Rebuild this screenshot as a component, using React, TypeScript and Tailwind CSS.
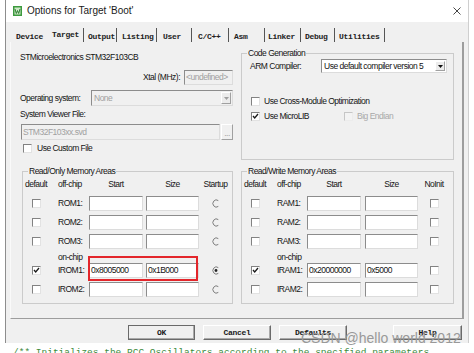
import React from 'react'

const UI = "font-['Liberation_Sans',Arial,sans-serif] text-[8.5px] leading-[11px] tracking-[-0.5px]"
const MONO = "font-['Liberation_Mono','Courier_New',monospace]"

function Check({ checked = false, disabled = false }: { checked?: boolean; disabled?: boolean }) {
  return (
    <span
      className={`relative block w-[9px] h-[9px] shrink-0 border ${
        disabled
          ? 'border-t-[#c6c6c6] border-l-[#c6c6c6] border-r-[#ececec] border-b-[#ececec] bg-[#f3f3f3]'
          : 'border-t-[#828282] border-l-[#828282] border-r-[#e2e2e2] border-b-[#e2e2e2] bg-white'
      }`}
    >
      {checked && (
        <svg viewBox="0 0 7 7" className="absolute left-0 top-0 w-[7px] h-[7px]">
          <path d="M1 3 L2.7 5 L6 1" fill="none" stroke="#1a1a1a" strokeWidth="1.3" />
        </svg>
      )}
    </span>
  )
}

function Radio({ on = false }: { on?: boolean }) {
  return (
    <svg width="8" height="9" viewBox="0 0 8 9" className="block">
      <path d="M6.3 1.6 A3.4 3.6 0 1 0 6.3 7.4" fill="none" stroke="#7c7c7c" strokeWidth="1" />
      {on && <circle cx="4" cy="4.5" r="1.4" fill="#222" />}
    </svg>
  )
}

function Box({ w, h = 'h-[15px]', dim = false, children }: { w: string; h?: string; dim?: boolean; children?: React.ReactNode }) {
  return (
    <div
      className={`${w} ${h} shrink-0 border border-t-[#8c8c8c] border-l-[#8c8c8c] border-r-[#dcdcdc] border-b-[#dcdcdc] pl-[1px] leading-[12px] whitespace-nowrap overflow-hidden ${
        dim ? 'bg-[#f0f0f0] text-[#a0a0a0]' : 'bg-white text-[#141414]'
      }`}
    >
      {children}
    </div>
  )
}

function Select({ w, h, value, dim = false }: { w: string; h: string; value: string; dim?: boolean }) {
  return (
    <div
      className={`${w} ${h} shrink-0 flex border border-t-[#8c8c8c] border-l-[#8c8c8c] border-r-[#dcdcdc] border-b-[#dcdcdc] ${
        dim ? 'bg-[#f0f0f0] text-[#a0a0a0]' : 'bg-white text-[#141414]'
      }`}
    >
      <span className="flex-1 pl-[2px] flex items-center whitespace-nowrap overflow-hidden">{value}</span>
      <span className="w-[10px] m-[1px] flex items-center justify-center bg-[#ececec] border border-t-white border-l-white border-r-[#a0a0a0] border-b-[#a0a0a0]">
        <svg width="5" height="3" viewBox="0 0 5 3">
          <path d="M0 0 H5 L2.5 3 Z" fill={dim ? '#a0a0a0' : '#111'} />
        </svg>
      </span>
    </div>
  )
}

function Group({ title, className, children }: { title: string; className: string; children?: React.ReactNode }) {
  return (
    <fieldset className={`${className} border border-[#cbcbcb] p-0 m-0 min-w-0`}>
      <legend className="ml-[5px] px-[1px] h-[11px] leading-[11px]">{title}</legend>
      {children}
    </fieldset>
  )
}

function MemTable({ ram = false }: { ram?: boolean }) {
  const c2 = ram ? 'w-[39px]' : 'w-[40px]'
  const gap = ram ? 'ml-[4px]' : 'ml-[3px]'
  const c5 = ram ? 'w-[32px]' : 'w-[33px]'
  const p = ram ? 'RAM' : 'ROM'
  const off = [1, 2, 3]
  const on = ram
    ? [
        { n: 'IRAM1:', s: '0x20000000', z: '0x5000', c: true },
        { n: 'IRAM2:', s: '', z: '', c: false },
      ]
    : [
        { n: 'IROM1:', s: '0x8005000', z: '0x1B000', c: true },
        { n: 'IROM2:', s: '', z: '', c: false },
      ]

  const row = (key: string, label: string, s: string, z: string, checked: boolean, mark: boolean, first: boolean) => (
    <div key={key} className={`relative flex items-center h-[15px] ${first ? '' : 'mt-[4px]'}`}>
      <div className="w-[26px] flex justify-center">
        <Check checked={checked} />
      </div>
      <div className={`${c2} pl-[9px] whitespace-nowrap`}>{label}</div>
      <Box w="w-[54px]">{s}</Box>
      <div className={gap}>
        <Box w="w-[53px]">{z}</Box>
      </div>
      <div className={`${c5} flex justify-center`}>{ram ? <Check /> : <Radio on={mark} />}</div>
      {!ram && mark && (
        <div className="absolute left-[65px] top-[-7px] w-[110px] h-[25px] border-2 border-[#e3262b]" />
      )}
    </div>
  )

  return (
    <div>
      <div className="mt-[2px] h-[11px] flex whitespace-nowrap">
        <div className="w-[26px] text-center">default</div>
        <div className={`${c2} pl-[9px]`}>off-chip</div>
        <div className="w-[54px] text-center">Start</div>
        <div className={gap}>
          <div className="w-[53px] text-center">Size</div>
        </div>
        <div className={`${c5} text-center`}>{ram ? 'NoInit' : 'Startup'}</div>
      </div>
      <div className="mt-[6px]">
        {off.map((i) => row(`o${i}`, `${p}${i}:`, '', '', false, false, i === 1))}
      </div>
      <div className="mt-[3px] h-[11px] flex">
        <div className="w-[26px]" />
        <div className="pl-[9px]">on-chip</div>
      </div>
      {on.map((r, i) => row(r.n, r.n, r.s, r.z, r.c, r.c, i === 0))}
    </div>
  )
}

const tabs = [
  { t: 'Device', c: 'w-[37px] pl-[4px]' },
  { t: 'Target', c: 'w-[35px] pl-[3px] border-r border-r-[#555]', on: true },
  { t: 'Output', c: 'w-[33px] pl-[4px] border-r border-r-[#555]' },
  { t: 'Listing', c: 'w-[40px] pl-[5px] border-r border-r-[#555]' },
  { t: 'User', c: 'w-[35px] pl-[6px] border-r border-r-[#555]' },
  { t: 'C/C++', c: 'w-[37px] pl-[6px] border-r border-r-[#555]' },
  { t: 'Asm', c: 'w-[36px] pl-[5px] border-r border-r-[#555]' },
  { t: 'Linker', c: 'w-[36px] pl-[3px] border-r border-r-[#555]' },
  { t: 'Debug', c: 'w-[34px] pl-[4px] border-r border-r-[#555]' },
  { t: 'Utilities', c: 'w-[50px] pl-[4px] border-r border-r-[#555]' },
]

const buttons = [
  { t: 'OK', c: 'w-[67px] border-[#6a6a6a]' },
  { t: 'Cancel', c: 'ml-[8px] w-[68px] border-t-white border-l-white border-r-[#6a6a6a] border-b-[#6a6a6a]' },
  { t: 'Defaults', c: 'ml-[8px] w-[68px] border-t-white border-l-white border-r-[#6a6a6a] border-b-[#6a6a6a]' },
  { t: 'Help', c: 'ml-[46px] w-[69px] border-t-white border-l-white border-r-[#6a6a6a] border-b-[#6a6a6a]' },
]

export default function App() {
  return (
    <div className={`relative w-[474px] h-[353px] overflow-hidden bg-white text-[#141414] ${UI}`}>
      <div className="ml-[5px] w-[464px] h-[343px] flex flex-col border-l border-l-[#8d8d8d] border-r border-r-[#cfcfcf] bg-[#f0f0f0]">
        {/* title bar */}
        <div className="h-[22px] shrink-0 flex items-center pl-[7px] bg-white">
          <svg width="9" height="10" viewBox="0 0 9 10" className="block">
            <rect width="9" height="10" fill="#3d9a3f" />
            <rect x="1.5" y="1.5" width="6" height="7" fill="#cfe9c8" />
            <path d="M2 3 L3.3 7.5 L4.5 4.5 L5.7 7.5 L7 3" stroke="#2d7f31" fill="none" strokeWidth="1" />
          </svg>
          <span className="ml-[5px] font-['Liberation_Sans',Arial,sans-serif] text-[10px] leading-[12px] tracking-normal text-[#1a1a1a]">
            Options for Target 'Boot'
          </span>
          <svg width="8" height="8" viewBox="0 0 8 8" className="ml-auto mr-[7px]">
            <path d="M0.5 0.5 L7.5 7.5 M7.5 0.5 L0.5 7.5" stroke="#333" strokeWidth="0.9" />
          </svg>
        </div>

        {/* tabs */}
        <div className={`h-[20px] shrink-0 flex items-end pl-[6px] ${MONO} text-[8px] font-bold tracking-[-0.3px] text-[#222]`}>
          {tabs.map((tab) => (
            <div
              key={tab.t}
              className={`h-[14px] flex items-center whitespace-nowrap ${tab.c} ${tab.on ? 'pb-[1px]' : 'pt-[2px]'}`}
            >
              {tab.t}
            </div>
          ))}
        </div>

        {/* tab page */}
        <div className="ml-[4px] w-[454px] h-[277px] shrink-0 border-l border-l-[#fafafa] border-r-2 border-r-[#9d9d9d] border-b border-b-[#9d9d9d] pl-[9px]">
          <div className="flex pt-[6px]">
            <div className="w-[213px] pt-[4px]">
              <div className="h-[11px] whitespace-nowrap">STMicroelectronics STM32F103CB</div>
              <div className="mt-[7px] h-[15px] flex items-center justify-end">
                <span className="mr-[4px]">Xtal (MHz):</span>
                <Box w="w-[49px]" dim>
                  &lt;undefined&gt;
                </Box>
              </div>
              <div className="mt-[5px] h-[16px] flex items-center">
                <span className="w-[71px] whitespace-nowrap">Operating system:</span>
                <Select w="w-[142px]" h="h-[16px]" value="None" dim />
              </div>
              <div className="mt-[3px] h-[11px]">System Viewer File:</div>
              <div className="mt-[4px] h-[16px] flex ml-[1px]">
                <Box w="w-[199px]" h="h-[16px]" dim>
                  <span className="leading-[14px]">STM32F103xx.svd</span>
                </Box>
                <div className="ml-[1px] w-[12px] h-[16px] flex items-end justify-center pb-[3px] border border-t-white border-l-white border-r-[#a0a0a0] border-b-[#a0a0a0] text-[#a0a0a0] leading-[6px]">
                  ...
                </div>
              </div>
              <div className="mt-[3px] h-[11px] flex items-center ml-[3px] gap-[5px]">
                <Check />
                <span>Use Custom File</span>
              </div>
            </div>

            <Group title="Code Generation" className="ml-[8px] w-[213px] h-[112px]">
              <div className="h-[14px] flex items-center pl-[8px]">
                <span className="w-[71px]">ARM Compiler:</span>
                <Select w="w-[126px]" h="h-[14px]" value="Use default compiler version 5" />
              </div>
              <div className="mt-[23px] h-[11px] flex items-center pl-[9px] gap-[4px]">
                <Check />
                <span>Use Cross-Module Optimization</span>
              </div>
              <div className="mt-[4px] h-[11px] flex items-center pl-[9px]">
                <div className="w-[93px] flex items-center gap-[4px]">
                  <Check checked />
                  <span>Use MicroLIB</span>
                </div>
                <Check disabled />
                <span className="ml-[4px] text-[#a8a8a8]">Big Endian</span>
              </div>
            </Group>
          </div>

          <div className="mt-[6px] flex">
            <Group title="Read/Only Memory Areas" className="ml-[2px] w-[211px] h-[138px]">
              <MemTable />
            </Group>
            <Group title="Read/Write Memory Areas" className="ml-[8px] w-[213px] h-[138px]">
              <MemTable ram />
            </Group>
          </div>
        </div>

        {/* buttons */}
        <div className={`mt-[6px] h-[15px] flex pl-[122px] ${MONO} text-[8px] font-bold tracking-[-0.3px] text-[#1a1a1a]`}>
          {buttons.map((b) => (
            <div
              key={b.t}
              className={`h-[15px] flex items-center justify-center border bg-[#f0f0f0] shadow-[inset_-1px_-1px_0_#a9a9a9] ${b.c}`}
            >
              {b.t}
            </div>
          ))}
        </div>
      </div>

      {/* editor line behind the dialog */}
      <div className={`pl-[13px] pt-[4px] ${MONO} text-[9.5px] leading-[12px] tracking-normal text-[#3d8b3d] whitespace-nowrap`}>
        /** Initializes the RCC Oscillators according to the specified parameters
      </div>

      {/* watermark */}
      <div className="absolute left-[301px] top-[330px] font-['Liberation_Sans',Arial,sans-serif] text-[14px] leading-[16px] tracking-normal text-[#999] whitespace-nowrap">
        CSDN @hello world 2012
      </div>
    </div>
  )
}
